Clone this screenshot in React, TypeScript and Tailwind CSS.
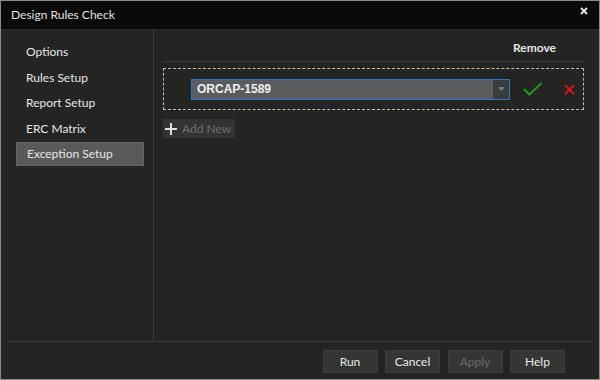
import { useState } from "react";

const menu = ["Options", "Rules Setup", "Report Setup", "ERC Matrix", "Exception Setup"];

export default function App() {
    const [active, setActive] = useState("Exception Setup");

    return (
        <div className="w-[600px] h-[380px] border border-[#8a8a8a] bg-[#242523] flex flex-col font-['Lato',sans-serif] text-[12px] text-[#e6e6e6] overflow-hidden">
            <div className="h-[28px] bg-[#0a0a0a] flex items-center justify-between pl-[10px] pr-[8px] shrink-0">
                <span className="text-[12px] text-[#e0e0e0]">Design Rules Check</span>
                <svg width="10" height="10" viewBox="0 0 10 10" className="mb-[8px] mr-[2px]">
                    <path d="M2 2 L8 8 M8 2 L2 8" stroke="#e8e8e8" strokeWidth="1.8" />
                </svg>
            </div>
            <div className="flex flex-1 mx-[6px] border-b border-[#3a3b39]">
                <div className="w-[147px] border-r border-[#3a3b39] pt-[11px] pl-[9px] pr-[9px] flex flex-col">
                    {menu.map((item) => (
                        <button
                            key={item}
                            onClick={() => setActive(item)}
                            className={`h-[24px] mb-[1.5px] pl-[10px] text-left text-[12px] ${active === item ? "bg-[#5a5a5a] border border-[#666]" : ""}`}
                        >
                            {item}
                        </button>
                    ))}
                </div>
                <div className="flex-1 pl-[9px] pr-[9px] pt-[7px]">
                    <div className="flex justify-end pr-[28px] h-[26px] items-center font-bold text-[12px] border-b border-[#3a3b39] pb-[2px]">
                        Remove
                    </div>
                    <div className="mt-[6px] h-[42px] border border-dashed border-[#bdbdbd] flex items-center pl-[27px]">
                        <div className="w-[319px] h-[21px] border border-[#1f7bd1] bg-[#5c5c5c] flex">
                            <span className="flex-1 pl-[5px] font-bold text-[12px] leading-[19px] text-[#f0f0f0] font-['Liberation_Sans',sans-serif]">ORCAP-1589</span>
                            <span className="w-[16px] bg-[#3b3b3b] flex items-center justify-center">
                                <svg width="7" height="4" viewBox="0 0 7 4"><path d="M0 0 H7 L3.5 4 Z" fill="#7a7a7a" /></svg>
                            </span>
                        </div>
                        <svg width="20" height="14" viewBox="0 0 20 14" className="ml-[13px]">
                            <path d="M1 7 L6.5 12.5 L18.5 1" stroke="#1d9a1d" strokeWidth="2" fill="none" />
                        </svg>
                        <svg width="11" height="11" viewBox="0 0 11 11" className="ml-[21px]">
                            <path d="M1 1 L10 10 M10 1 L1 10" stroke="#d8141a" strokeWidth="2.2" />
                        </svg>
                    </div>
                    <div className="mt-[9px] w-[72px] h-[19px] bg-[#333432] flex items-center text-[#6f6f6f] text-[12px]">
                        <svg width="14" height="14" viewBox="0 0 14 14" className="ml-[1px] mr-[4px]">
                            <path d="M7 1 V13 M1 7 H13" stroke="#dcdcdc" strokeWidth="2" />
                        </svg>
                        Add New
                    </div>
                </div>
            </div>
            <div className="h-[37px] shrink-0 flex items-center justify-end gap-[7.5px] pr-[34px] pt-[2px]">
                {["Run", "Cancel", "Apply", "Help"].map((b) => (
                    <button
                        key={b}
                        className={`w-[55px] h-[23px] bg-[#353634] border border-[#3c3d3b] text-[12px] ${b === "Apply" ? "text-[#6a6a6a]" : "text-[#eaeaea]"}`}
                    >
                        {b}
                    </button>
                ))}
            </div>
        </div>
    );
}
